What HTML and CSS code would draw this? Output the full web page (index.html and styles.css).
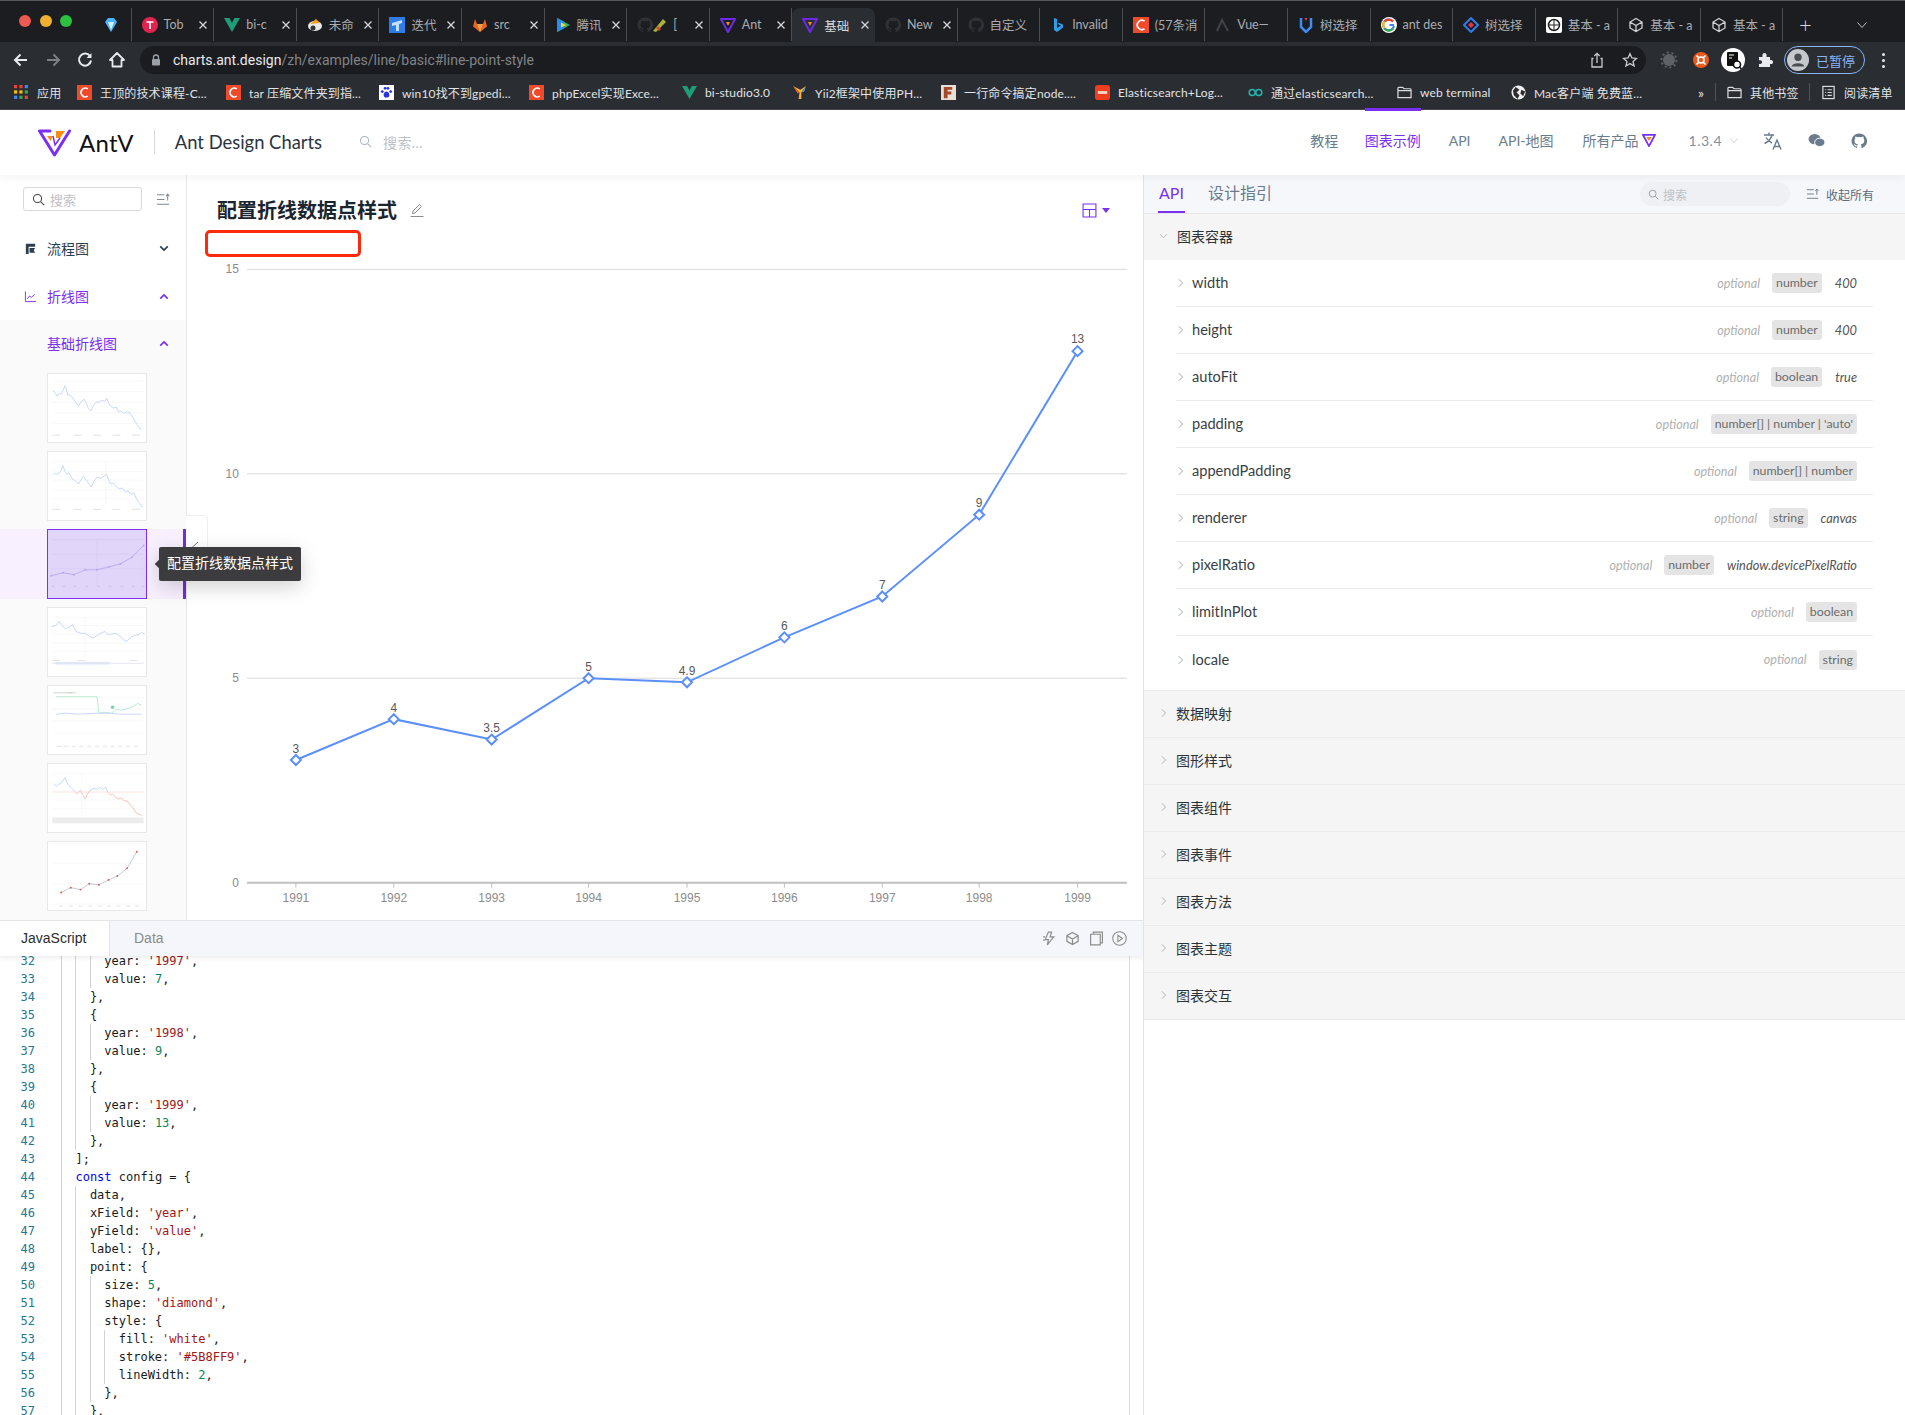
FILE: index.html
```html
<!DOCTYPE html>
<html lang="zh">
<head>
<meta charset="utf-8">
<title>配置折线数据点样式</title>
<link rel="stylesheet" href="styles.css">
</head>
<body>
<svg class="defs" width="0" height="0" aria-hidden="true">
  <defs>
    <symbol id="antv" viewBox="0 0 33 28">
      <path d="M1.5 2 H12 M1.5 2 L16.5 26 L31.5 2" fill="none" stroke="#7a2ff2" stroke-width="3" stroke-linejoin="round" stroke-linecap="round"/>
      <path d="M9 7 H15 L12.5 12 Z" fill="#fa8c16"/>
      <path d="M18 2 H27 L22 9 H18 Z" fill="#fa8c16"/>
      <path d="M15 7 L17 16 L22 9" fill="none" stroke="#7a2ff2" stroke-width="1.5"/>
    </symbol>
    <symbol id="cfav" viewBox="0 0 16 16"><rect width="16" height="16" fill="#f04a2a"/><path d="M11.5 4.2A4.6 4.6 0 1 0 11.5 11.8" fill="none" stroke="#fff" stroke-width="1.7"/></symbol>
    <symbol id="vfav" viewBox="0 0 16 16"><path d="M0 1H5.5L8 6L10.5 1H16L8 15Z" fill="#1f9d78"/></symbol>
    <symbol id="purp" viewBox="0 0 16 16"><path d="M1 2H15L8 15Z" fill="none" stroke="#6d2be8" stroke-width="2" stroke-linejoin="round"/><path d="M6 5H10L8 9Z" fill="#fa8c16"/></symbol>
    <symbol id="gh" viewBox="0 0 16 16"><path d="M8 .5a7.5 7.5 0 0 0-2.4 14.6c.4.1.5-.2.5-.4v-1.3c-2.1.5-2.5-1-2.5-1-.3-.9-.8-1.100-.8-1.100-.7-.5.100-.5.100-.5.800.1 1.200.8 1.200.8.700 1.200 1.800.9 2.300.7.100-.5.300-.9.500-1.100-1.700-.2-3.400-.8-3.400-3.700 0-.8.300-1.500.8-2-.1-.2-.3-1 .1-2 0 0 .6-.2 2.100.8a7 7 0 0 1 3.800 0c1.400-1 2.100-.8 2.100-.8.400 1 .1 1.800.1 2 .5.500.8 1.200.8 2 0 2.900-1.800 3.500-3.400 3.700.3.200.5.700.5 1.400v2.100c0 .2.100.5.500.4A7.500 7.500 0 0 0 8 .5Z"/></symbol>
    <symbol id="cube" viewBox="0 0 16 16"><path d="M8 1.500 14 5V11L8 14.500 2 11V5ZM2 5 8 8.500 14 5M8 8.500V14.500" fill="none" stroke="currentColor" stroke-width="1.300"/></symbol>
    <symbol id="folder" viewBox="0 0 16 14"><path d="M1 12.500V2.500C1 2 1.300 1.500 2 1.500H6L7.500 3H14C14.600 3 15 3.400 15 4V12.500Z M1 5H15" fill="none" stroke="#dadce0" stroke-width="1.300"/></symbol>
    <symbol id="search" viewBox="0 0 16 16"><circle cx="6.800" cy="6.800" r="5" fill="none" stroke="currentColor" stroke-width="1.300"/><path d="M10.500 10.500 15 15" stroke="currentColor" stroke-width="1.300"/></symbol>
    <symbol id="collapse" viewBox="0 0 16 14"><path d="M1 2H9M1 7H9M1 12H14M12.500 8V1.500M10.800 3.400 12.500 1.200 14.200 3.400" fill="none" stroke="currentColor" stroke-width="1.100"/></symbol>
    <symbol id="down" viewBox="0 0 12 8"><path d="M1.500 1.500 6 6 10.500 1.500" fill="none" stroke="currentColor" stroke-width="2"/></symbol>
    <symbol id="up" viewBox="0 0 12 8"><path d="M1.500 6.500 6 2 10.500 6.500" fill="none" stroke="currentColor" stroke-width="2"/></symbol>
    <symbol id="right" viewBox="0 0 8 12"><path d="M2 1.500 6.500 6 2 10.500" fill="none" stroke="currentColor" stroke-width="1"/></symbol>
    <symbol id="tdown" viewBox="0 0 12 8"><path d="M1.500 1.500 6 6.500 10.500 1.500" fill="none" stroke="currentColor" stroke-width="1"/></symbol>
    <symbol id="x" viewBox="0 0 10 10"><path d="M1.500 1.500 8.500 8.500M8.500 1.500 1.500 8.500" stroke="#d5d7da" stroke-width="1.300"/></symbol>
  </defs>
</svg>

<div class="chrome">
  <div class="tabbar">
    <div class="lights"><i class="light red"></i><i class="light amber"></i><i class="light green"></i></div>
    <div class="tab pin"><svg class="fav" viewBox="0 0 16 16"><path d="M2 5 5 1H11L14 5 8 15Z" fill="#48b4ff"/><path d="M5 5H11L8 13Z" fill="#d9f1ff"/></svg></div>
    <div class="tab"><svg class="fav" viewBox="0 0 16 16"><circle cx="8" cy="8" r="8" fill="#e0244f"/><path d="M4.500 5H11.500M8 5V12" stroke="#fff" stroke-width="1.600"/></svg><span>Tob</span><svg class="close"><use href="#x"/></svg></div>
    <div class="tab"><svg class="fav"><use href="#vfav"/></svg><span>bi-c</span><svg class="close"><use href="#x"/></svg></div>
    <div class="tab"><svg class="fav" viewBox="0 0 16 16"><ellipse cx="8" cy="9" rx="7" ry="5" fill="#e8e8e8"/><path d="M3 7 9 2 13 6Z" fill="#f0a020"/><circle cx="6" cy="11" r="2.500" fill="#333"/></svg><span>未命</span><svg class="close"><use href="#x"/></svg></div>
    <div class="tab"><svg class="fav" viewBox="0 0 16 16"><rect width="16" height="16" fill="#2f7ce6"/><path d="M3 6 13 3V6L10 7V14H7V8L3 9Z" fill="#bfe0ff"/></svg><span>迭代</span><svg class="close"><use href="#x"/></svg></div>
    <div class="tab"><svg class="fav" viewBox="0 0 16 16"><path d="M8 15 1 9.500 3 2 5 7H11L13 2 15 9.500Z" fill="#e8632a"/><path d="M8 15 5 7H11Z" fill="#f5a142"/></svg><span>src</span><svg class="close"><use href="#x"/></svg></div>
    <div class="tab"><svg class="fav" viewBox="0 0 16 16"><path d="M2 1 15 8 2 15Z" fill="#31b36b"/><path d="M2 1 9 4.500V11.500L2 15Z" fill="#2a8cef"/><path d="M6 5.500 11 8 6 10.500Z" fill="#f7d23e"/></svg><span>腾讯</span><svg class="close"><use href="#x"/></svg></div>
    <div class="tab"><svg class="fav dark"><use href="#gh"/></svg><svg class="fav mini" viewBox="0 0 16 16"><path d="M2 14 12 2 15 5 5 15Z" fill="#a7b23a"/><path d="M7 9 10 12 8 14 5 11Z" fill="#d2453a"/></svg><span>[</span><svg class="close"><use href="#x"/></svg></div>
    <div class="tab"><svg class="fav"><use href="#purp"/></svg><span>Ant</span><svg class="close"><use href="#x"/></svg></div>
    <div class="tab active"><svg class="fav"><use href="#purp"/></svg><span>基础</span><svg class="close"><use href="#x"/></svg></div>
    <div class="tab"><svg class="fav dark"><use href="#gh"/></svg><span>New</span><svg class="close"><use href="#x"/></svg></div>
    <div class="tab"><svg class="fav dark"><use href="#gh"/></svg><span>自定义</span></div>
    <div class="tab"><svg class="fav" viewBox="0 0 16 16"><path d="M4 1 7 2V11L11 8.500 8.500 7.500 7.500 5.500 13 7.500V10.500L7 15 4 13Z" fill="#2c9fe8"/></svg><span>Invalid</span></div>
    <div class="tab"><svg class="fav"><use href="#cfav"/></svg><span>(57条消</span></div>
    <div class="tab"><svg class="fav dark" viewBox="0 0 16 16"><path d="M2 14 7 3 13 14" fill="none" stroke="#3f4246" stroke-width="2"/></svg><span>Vue—</span></div>
    <div class="tab"><svg class="fav" viewBox="0 0 16 16"><path d="M3 1V10L8 15 13 10V1" fill="none" stroke="#3f8cf0" stroke-width="2.500"/><path d="M6.500 1H9.500L8 4Z" fill="#e0354b"/></svg><span>树选择</span></div>
    <div class="tab"><svg class="fav" viewBox="0 0 16 16"><circle cx="8" cy="8" r="8" fill="#fff"/><path d="M13 8H8.500M12 4.500A5.500 5.500 0 1 0 13 9" fill="none" stroke="#4285f4" stroke-width="2.200"/><path d="M3.600 4.500A5.500 5.500 0 0 1 12 4.500" fill="none" stroke="#ea4335" stroke-width="2.200"/><path d="M3.500 11.300A5.500 5.500 0 0 1 3.600 4.500" fill="none" stroke="#fbbc05" stroke-width="2.200"/><path d="M3.500 11.300A5.500 5.500 0 0 0 12 11.800" fill="none" stroke="#34a853" stroke-width="2.200"/></svg><span>ant des</span></div>
    <div class="tab"><svg class="fav" viewBox="0 0 16 16"><path d="M8 1 15 8 8 15 1 8Z" fill="none" stroke="#2f7ce6" stroke-width="2"/><path d="M8 5 11 8 8 11 5 8Z" fill="#e0354b"/></svg><span>树选择</span></div>
    <div class="tab"><svg class="fav" viewBox="0 0 16 16"><rect width="16" height="16" rx="2" fill="#fff"/><circle cx="8" cy="8" r="5.500" fill="none" stroke="#222" stroke-width="1.500"/><path d="M8 2.500V13.500M2.500 8H13.500" stroke="#222"/></svg><span>基本 - a</span></div>
    <div class="tab"><svg class="fav lite"><use href="#cube"/></svg><span>基本 - a</span></div>
    <div class="tab"><svg class="fav lite"><use href="#cube"/></svg><span>基本 - a</span></div>
    <div class="newtab">+</div>
    <svg class="tabmore"><use href="#tdown"/></svg>
  </div>

  <div class="toolbar">
    <svg class="tool" viewBox="0 0 18 18"><path d="M15 9H3.500M8.500 3.500 3 9 8.500 14.500" fill="none" stroke="#e8eaed" stroke-width="2"/></svg>
    <svg class="tool" viewBox="0 0 18 18"><path d="M3 9H14.500M9.500 3.500 15 9 9.500 14.500" fill="none" stroke="#7d8085" stroke-width="2"/></svg>
    <svg class="tool" viewBox="0 0 18 18"><path d="M14 5.200A6 6 0 1 0 15 9.500" fill="none" stroke="#e8eaed" stroke-width="2"/><path d="M15.500 2V7H10.500Z" fill="#e8eaed"/></svg>
    <svg class="tool" viewBox="0 0 18 18"><path d="M9 2 2 9H4.500V15.500H13.500V9H16Z" fill="none" stroke="#e8eaed" stroke-width="1.800" stroke-linejoin="round"/></svg>
    <div class="omni">
      <svg class="lock" viewBox="0 0 10 12"><path d="M2.500 5V3.500a2.500 2.500 0 0 1 5 0V5" fill="none" stroke="#9aa0a6" stroke-width="1.300"/><rect x="1" y="5" width="8" height="6.500" rx="1" fill="#9aa0a6"/></svg>
      <span class="host">charts.ant.design</span><span class="path">/zh/examples/line/basic#line-point-style</span>
      <svg class="omni-ico first" viewBox="0 0 16 16"><path d="M4.500 6.500H3V15H13V6.500H11.500M8 11V1.500M5.300 4 8 1.300 10.700 4" fill="none" stroke="#c8cacd" stroke-width="1.300"/></svg>
      <svg class="omni-ico" viewBox="0 0 16 16"><path d="M8 1.700 9.900 6 14.500 6.400 11 9.500 12.100 14 8 11.600 3.900 14 5 9.500 1.500 6.400 6.100 6Z" fill="none" stroke="#c8cacd" stroke-width="1.300"/></svg>
    </div>
    <svg class="ext gear" viewBox="0 0 18 18"><circle cx="9" cy="9" r="6" fill="#5f6266"/><circle cx="9" cy="9" r="7.500" fill="none" stroke="#5f6266" stroke-width="2" stroke-dasharray="2 2.700"/></svg>
    <svg class="ext orange" viewBox="0 0 16 16"><circle cx="8" cy="8" r="8" fill="#e95a1f"/><circle cx="8" cy="8" r="3" fill="none" stroke="#fff" stroke-width="1.500"/><path d="M3.500 3.500 6 6M12.500 3.500 10 6M3.500 12.500 6 10M12.500 12.500 10 10" stroke="#fff" stroke-width="1.700"/></svg>
    <svg class="ext blackc" viewBox="0 0 24 24"><circle cx="12" cy="12" r="12" fill="#fff"/><rect x="6" y="4" width="11" height="14" rx="1" fill="#111"/><path d="M8 7H13M8 10H11" stroke="#fff"/><circle cx="16" cy="16.500" r="3.500" fill="#fff" stroke="#111" stroke-width="1.600"/><path d="M18.500 19 20.500 21" stroke="#111" stroke-width="1.600"/></svg>
    <svg class="ext puzzle" viewBox="0 0 16 16"><path d="M2 5H5.500C5 2 6 1 7.500 1S10 2 9.500 5H13V8C15.500 7.500 16 8.800 16 10S15.500 12.500 13 12V15H2V11.800C4 12.400 5 11.500 5 10S4 7.800 2 8.300Z" fill="#e8eaed"/></svg>
    <div class="profile">
      <svg class="avatar" viewBox="0 0 24 24"><circle cx="12" cy="12" r="12" fill="#c5c8cd"/><circle cx="12" cy="9" r="4" fill="#4a4d52"/><path d="M5 19C6 14.500 18 14.500 19 19Z" fill="#4a4d52"/></svg>
      <span>已暂停</span>
    </div>
    <div class="dots"><i></i><i></i><i></i></div>
  </div>

  <div class="bookmarks">
    <a class="bm"><svg class="bi" viewBox="0 0 14 14"><g fill="#ea4335"><rect width="3" height="3"/><rect x="5" width="3" height="3"/></g><rect x="10" width="3" height="3" fill="#4285f4"/><g fill="#fbbc05"><rect y="5" width="3" height="3"/><rect x="5" y="5" width="3" height="3"/></g><rect x="10" y="5" width="3" height="3" fill="#34a853"/><g fill="#4285f4"><rect y="10" width="3" height="3"/></g><rect x="5" y="10" width="3" height="3" fill="#34a853"/><rect x="10" y="10" width="3" height="3" fill="#ea4335"/></svg>应用</a>
    <a class="bm"><svg class="bi"><use href="#cfav"/></svg>王顶的技术课程-C...</a>
    <a class="bm"><svg class="bi"><use href="#cfav"/></svg>tar 压缩文件夹到指...</a>
    <a class="bm"><svg class="bi" viewBox="0 0 16 16"><rect width="16" height="16" fill="#fff"/><path d="M8 7C5 7 4 12 6 13 7 13.500 9 13.500 10 13 12 12 11 7 8 7Z" fill="#2932e1"/><g fill="#2932e1"><circle cx="3.500" cy="7" r="1.500"/><circle cx="6.500" cy="3.500" r="1.500"/><circle cx="9.500" cy="3.500" r="1.500"/><circle cx="12.500" cy="7" r="1.500"/></g></svg>win10找不到gpedi...</a>
    <a class="bm"><svg class="bi"><use href="#cfav"/></svg>phpExcel实现Exce...</a>
    <a class="bm"><svg class="bi"><use href="#vfav"/></svg>bi-studio3.0</a>
    <a class="bm"><svg class="bi" viewBox="0 0 16 16"><path d="M1 1 8 8 7 15H10L10 8 15 1 9 5Z" fill="#f2b035"/><path d="M1 1 8 8 6 9Z" fill="#e85c3a"/><path d="M15 1 10 8 13 7Z" fill="#4ba3dc"/></svg>Yii2框架中使用PH...</a>
    <a class="bm"><svg class="bi" viewBox="0 0 16 16"><rect width="16" height="16" fill="#e8e0d8"/><path d="M3 2H12V5H7V7H11V10H7V14H3Z" fill="#a34a2c"/></svg>一行命令搞定node....</a>
    <a class="bm"><svg class="bi" viewBox="0 0 16 16"><rect width="16" height="16" rx="3" fill="#f03d1f"/><rect x="3" y="6.500" width="10" height="3" fill="#ffd7c9"/></svg>Elasticsearch+Log...</a>
    <a class="bm"><svg class="bi" viewBox="0 0 16 16"><circle cx="4.500" cy="8" r="3.200" fill="none" stroke="#25b5ad" stroke-width="1.600"/><circle cx="11.500" cy="8" r="3.200" fill="none" stroke="#25b5ad" stroke-width="1.600"/></svg>通过elasticsearch...</a>
    <a class="bm"><svg class="bi"><use href="#folder"/></svg>web terminal</a>
    <a class="bm"><svg class="bi" viewBox="0 0 16 16"><circle cx="8" cy="8" r="7.500" fill="#f1f1f1"/><path d="M5 2 9 5 6 8 9 11 7 15 3 11 2 6ZM11 5 15 7 13 12 10 9Z" fill="#2b2d31"/></svg>Mac客户端 免费蓝...</a>
    <a class="bm more">»</a>
    <a class="bm sep"><svg class="bi"><use href="#folder"/></svg>其他书签</a>
    <a class="bm sep"><svg class="bi" viewBox="0 0 16 16"><rect x="2" y="1.500" width="12" height="13" fill="none" stroke="#dadce0" stroke-width="1.300"/><path d="M4.500 5H5.500M7 5H11.500M4.500 8H5.500M7 8H11.500M4.500 11H5.500M7 11H11.500" stroke="#dadce0" stroke-width="1.200"/></svg>阅读清单</a>
  </div>
</div>

<header class="site">
  <svg class="logo"><use href="#antv"/></svg>
  <span class="brand">AntV</span>
  <span class="brand-sep"></span>
  <span class="product">Ant Design Charts</span>
  <svg class="hsearch"><use href="#search"/></svg>
  <span class="hsearch-text">搜索…</span>
  <nav class="nav">
    <a class="n1">教程</a>
    <a class="n2 on">图表示例</a>
    <a class="n3">API</a>
    <a class="n4">API-地图</a>
    <a class="n5">所有产品<svg class="mini-logo" viewBox="0 0 16 16"><path d="M1 2H15L8 15Z" fill="none" stroke="#7a2ff2" stroke-width="2" stroke-linejoin="round"/><path d="M5 4.500H11L8 9.500Z" fill="#fa8c16"/></svg></a>
    <span class="ver">1.3.4<svg class="ver-c"><use href="#tdown"/></svg></span>
    <svg class="hico lang" viewBox="0 0 20 20"><path d="M1 4H11M6 1.500V4M9 4C8 8 5 11 1.500 12.500M3 6.500C4.500 9 6.500 11 9 12M10 18.500 14 9 18 18.500M11.500 15.500H16.500" fill="none" stroke="#697b8c" stroke-width="1.400"/></svg>
    <svg class="hico wechat" viewBox="0 0 18 16"><ellipse cx="7" cy="6.500" rx="6.500" ry="5.500" fill="#697b8c"/><ellipse cx="12.500" cy="10" rx="5.500" ry="4.500" fill="#697b8c" stroke="#fff"/></svg>
    <svg class="hico github"><use href="#gh"/></svg>
  </nav>
</header>

<main class="main">
  <section class="left">
    <div class="upper">
      <aside class="side">
        <div class="side-search">
          <div class="sbox"><svg class="sbox-i"><use href="#search"/></svg><span>搜索</span></div>
          <svg class="side-collapse"><use href="#collapse"/></svg>
        </div>
        <div class="menu">
          <svg class="menu-i" viewBox="0 0 14 14"><path d="M2 2H12V5H5V13H2ZM6 6.500H12L10.500 9 12 11.500H6Z" fill="#2c3e50"/></svg>
          <span>流程图</span><svg class="caret"><use href="#down"/></svg>
        </div>
        <div class="menu purple">
          <svg class="menu-i" viewBox="0 0 14 14"><path d="M1.500 1.500V12.500H13M3.500 9.500 6 6.500 8 8 11.500 4.500" fill="none" stroke="currentColor" stroke-width="1"/></svg>
          <span>折线图</span><svg class="caret"><use href="#up"/></svg>
        </div>
        <div class="sub">
          <div class="sub-head"><span>基础折线图</span><svg class="caret"><use href="#up"/></svg></div>
          <div class="thumbrow"><svg class="thumb" viewBox="0 0 100 70"><g class="tg"><path d="M4 7H98M4 18H98M4 29H98M4 40H98M4 51H98"/></g><polyline class="tl" points="5,17 7,20 9,23 11,20 13,21 15,17 17,12 18,14 20,22 22,21 25,25 28,29 31,33 34,28 37,26 39,30 41,35 44,38 46,33 49,29 52,29 55,27 58,28 60,25 62,30 64,33 67,35 70,34 72,39 75,38 78,41 80,39 84,40 87,45 90,50 93,55 96,57"/><g class="ta"><path d="M4 63H12M26 63H34M46 63H54M66 63H74M86 63H94"/></g></svg></div>
          <div class="thumbrow"><svg class="thumb" viewBox="0 0 100 70"><g class="tg"><path d="M4 10H98M4 20H98M4 29H98M4 39H98M4 48H98M59 10V57"/></g><polyline class="tl" points="5,24 7,22 10,23 13,19 15,14 17,20 19,23 21,21 24,27 28,30 31,33 34,28 36,25 39,29 42,33 44,36 47,30 50,26 54,27 57,25 60,23 62,29 64,33 67,32 70,36 73,38 76,37 79,41 82,40 85,44 88,42 91,49 94,53 97,57"/><g class="ta"><path d="M4 59H12M26 59H34M46 59H54M66 59H74M86 59H94"/></g></svg></div>
          <div class="thumbrow selected"><svg class="thumb" viewBox="0 0 100 70"><g class="tg"><path d="M3 10H98M3 25H98M3 40H98M50 10V58"/></g><polyline class="tl" points="3,47 15,44 26,46 38,41 50,41 62,38 74,35 86,28 98,16"/><g class="tp"><circle cx="3" cy="47" r="1"/><circle cx="15" cy="44" r="1"/><circle cx="26" cy="46" r="1"/><circle cx="38" cy="41" r="1"/><circle cx="50" cy="41" r="1"/><circle cx="62" cy="38" r="1"/><circle cx="74" cy="35" r="1"/><circle cx="86" cy="28" r="1"/><circle cx="98" cy="16" r="1"/></g><g class="ta"><path d="M3 58H6M14 58H17M26 58H29M38 58H41M50 58H53M62 58H65M74 58H77M86 58H89M96 58H99"/></g></svg></div>
          <div class="thumbrow"><svg class="thumb" viewBox="0 0 100 70"><g class="tg"><path d="M4 10H98M4 18H98M4 27H98M4 36H98M4 45H98M38 10V52"/></g><polyline class="tl" points="3,19 8,18 11,14 14,18 17,21 21,20 25,17 28,24 33,26 38,26 42,29 46,31 52,27 58,24 61,27 64,27 70,26 75,30 79,34 81,34 85,30 90,28 94,27 96,25 99,27"/><g class="ta"><path d="M4 54H12M30 54H38M84 54H92"/></g><rect x="7" y="56" width="56" height="2" fill="#c5d7fb"/><path d="M3 57H98" stroke="#e4e8f0"/></svg></div>
          <div class="thumbrow"><svg class="thumb" viewBox="0 0 100 70"><g class="tg"><path d="M4 12H98M4 24H98M4 36H98M4 48H98"/></g><polyline class="tl green" points="8,11 50,11 52,28 58,27 65,28 70,24 75,25 85,22 92,18 96,20"/><polyline class="tl" points="8,29 18,28 30,29 50,28 62,28 75,29 85,29 96,29"/><circle cx="66" cy="22" r="1.800" fill="#6fd8a7"/><path d="M5 7H24M20 7H28" stroke="#c9d5c9"/><g class="ta"><path d="M8 62H14M16 62H21M24 62H28M32 62H36M40 62H44M48 62H52M56 62H60M64 62H68M72 62H76M80 62H84M88 62H92"/></g></svg></div>
          <div class="thumbrow"><svg class="thumb" viewBox="0 0 100 70"><g class="tg"><path d="M4 10H98M4 28H98M4 37H98M4 46H98M34 10V55"/></g><path d="M4 29H98" stroke="#ffd5cc" stroke-width=".5"/><polyline class="tl" points="5,20 8,23 10,21 13,20 15,17 17,14 19,19 21,22 24,25 26,27 29,31"/><polyline class="tl red" points="29,31 31,29 33,27 36,33 38,36 40,31 43,27"/><polyline class="tl" points="43,27 47,25 50,26 53,24 56,26 59,24 61,29"/><polyline class="tl red" points="61,29 64,32 66,31 69,34 72,36 75,35 78,38 81,38 84,42 87,45 90,50 96,53"/><rect x="4" y="55" width="94" height="6" fill="#ececec"/></svg></div>
          <div class="thumbrow"><svg class="thumb" viewBox="0 0 100 70"><g class="tg"><path d="M4 2H98M4 22H98M4 43H98M4 64H98"/></g><polyline class="tl grey" points="13,52 23,47 33,49 42,43 52,44 62,39 71,35 81,27 91,10"/><g class="tr"><circle cx="13" cy="52" r="1"/><circle cx="23" cy="47" r="1"/><circle cx="33" cy="49" r="1"/><circle cx="42" cy="43" r="1"/><circle cx="52" cy="44" r="1"/><circle cx="62" cy="39" r="1"/><circle cx="71" cy="35" r="1"/><circle cx="81" cy="27" r="1"/><circle cx="91" cy="10" r="1"/></g><g class="ta"><path d="M11 66H15M21 66H25M31 66H35M41 66H45M51 66H55M60 66H64M70 66H74M80 66H84M89 66H93"/></g></svg></div>
        </div>
      </aside>
      <div class="chart">
        <div class="chart-head">
          <h1>配置折线数据点样式</h1>
          <svg class="edit" viewBox="0 0 14 14"><path d="M2.500 10.500 3 8 9.500 1.500 11.500 3.500 5 10ZM.500 13.500H13.500" fill="none" stroke="#8c8c8c" stroke-width="1"/></svg>
          <svg class="layout" viewBox="0 0 14 14"><path d="M1 1H13V13H1ZM1 6H13M7 6V13" fill="none" stroke="#7a2ff2" stroke-width="1"/></svg>
          <i class="layout-caret"></i>
        </div>
        <svg class="plot" viewBox="0 0 957 712">
          <g class="grid">
            <path d="M60 34H941M60 238.700H941M60 443.300H941"/>
            <path class="axis" d="M60 648H941"/>
            <path class="tick" d="M109 648V653M207 648V653M305 648V653M402 648V653M500.500 648V653M598 648V653M696 648V653M793 648V653M891.500 648V653"/>
          </g>
          <g class="ylab">
            <text x="52" y="38">15</text><text x="52" y="243">10</text><text x="52" y="447">5</text><text x="52" y="652">0</text>
          </g>
          <g class="xlab">
            <text x="109" y="667">1991</text><text x="207" y="667">1992</text><text x="305" y="667">1993</text><text x="402" y="667">1994</text><text x="500.500" y="667">1995</text><text x="598" y="667">1996</text><text x="696" y="667">1997</text><text x="793" y="667">1998</text><text x="891.500" y="667">1999</text>
          </g>
          <polyline class="series" points="109,525.200 207,484.300 305,504.700 402,443.300 500.500,447.400 598,402.400 696,361.500 793,279.600 891.500,115.900"/>
          <g class="pts">
            <path d="M109 520.200 114 525.200 109 530.200 104 525.200Z"/>
            <path d="M207 479.300 212 484.300 207 489.300 202 484.300Z"/>
            <path d="M305 499.700 310 504.700 305 509.700 300 504.700Z"/>
            <path d="M402 438.300 407 443.300 402 448.300 397 443.300Z"/>
            <path d="M500.500 442.400 505.500 447.400 500.500 452.400 495.500 447.400Z"/>
            <path d="M598 397.400 603 402.400 598 407.400 593 402.400Z"/>
            <path d="M696 356.500 701 361.500 696 366.500 691 361.500Z"/>
            <path d="M793 274.600 798 279.600 793 284.600 788 279.600Z"/>
            <path d="M891.500 110.900 896.500 115.900 891.500 120.900 886.500 115.900Z"/>
          </g>
          <g class="dlab">
            <text x="109" y="518">3</text><text x="207" y="477">4</text><text x="305" y="497">3.5</text><text x="402" y="436">5</text><text x="500.500" y="440">4.9</text><text x="598" y="395">6</text><text x="696" y="354">7</text><text x="793" y="272">9</text><text x="891.500" y="108">13</text>
          </g>
        </svg>
      </div>
      <span class="annot"></span>
      <div class="handle"><svg class="handle-i" viewBox="0 0 8 12"><path d="M7 1 1.500 6 7 11" fill="none" stroke="#697b8c" stroke-width="1"/></svg></div>
      <div class="tip">配置折线数据点样式</div>
    </div>
    <div class="editor">
      <div class="ed-tabs">
        <div class="ed-tab on">JavaScript</div>
        <div class="ed-tab">Data</div>
        <div class="ed-tools">
          <svg viewBox="0 0 14 14"><path d="M9 1H6L3 8H6L5 13 11 5.500H7.500ZM1 5.500H3M1 8.500H2.500" fill="none" stroke="#8c8c8c" stroke-width="1.100"/></svg>
          <svg><use href="#cube"/></svg>
          <svg viewBox="0 0 14 14"><path d="M4 3V1H12.500V11H10.500M1.500 3H10.500V13H1.500Z" fill="none" stroke="#8c8c8c" stroke-width="1.100"/></svg>
          <svg viewBox="0 0 14 14"><circle cx="7" cy="7" r="6.300" fill="none" stroke="#8c8c8c" stroke-width="1"/><path d="M5.500 4 9.700 7 5.500 10Z" fill="none" stroke="#8c8c8c"/></svg>
        </div>
      </div>
      <div class="code">
        <div class="ln"><b>32</b><i></i><i></i><i></i>year: <s>'1997'</s>,</div>
        <div class="ln"><b>33</b><i></i><i></i><i></i>value: <u>7</u>,</div>
        <div class="ln"><b>34</b><i></i><i></i>},</div>
        <div class="ln"><b>35</b><i></i><i></i>{</div>
        <div class="ln"><b>36</b><i></i><i></i><i></i>year: <s>'1998'</s>,</div>
        <div class="ln"><b>37</b><i></i><i></i><i></i>value: <u>9</u>,</div>
        <div class="ln"><b>38</b><i></i><i></i>},</div>
        <div class="ln"><b>39</b><i></i><i></i>{</div>
        <div class="ln"><b>40</b><i></i><i></i><i></i>year: <s>'1999'</s>,</div>
        <div class="ln"><b>41</b><i></i><i></i><i></i>value: <u>13</u>,</div>
        <div class="ln"><b>42</b><i></i><i></i>},</div>
        <div class="ln"><b>43</b><i></i>];</div>
        <div class="ln"><b>44</b><i></i><em>const</em> config = {</div>
        <div class="ln"><b>45</b><i></i><i></i>data,</div>
        <div class="ln"><b>46</b><i></i><i></i>xField: <s>'year'</s>,</div>
        <div class="ln"><b>47</b><i></i><i></i>yField: <s>'value'</s>,</div>
        <div class="ln"><b>48</b><i></i><i></i>label: {},</div>
        <div class="ln"><b>49</b><i></i><i></i>point: {</div>
        <div class="ln"><b>50</b><i></i><i></i><i></i>size: <u>5</u>,</div>
        <div class="ln"><b>51</b><i></i><i></i><i></i>shape: <s>'diamond'</s>,</div>
        <div class="ln"><b>52</b><i></i><i></i><i></i>style: {</div>
        <div class="ln"><b>53</b><i></i><i></i><i></i><i></i>fill: <s>'white'</s>,</div>
        <div class="ln"><b>54</b><i></i><i></i><i></i><i></i>stroke: <s>'#5B8FF9'</s>,</div>
        <div class="ln"><b>55</b><i></i><i></i><i></i><i></i>lineWidth: <u>2</u>,</div>
        <div class="ln"><b>56</b><i></i><i></i><i></i>},</div>
        <div class="ln"><b>57</b><i></i><i></i>},</div>
      </div>
    </div>
  </section>

  <section class="right">
    <div class="r-head">
      <a class="r-tab on">API</a>
      <a class="r-tab">设计指引</a>
      <div class="r-search"><svg><use href="#search"/></svg><span>搜索</span></div>
      <div class="r-collapse"><svg><use href="#collapse"/></svg><span>收起所有</span></div>
    </div>
    <div class="sec open"><svg class="sec-a down"><use href="#tdown"/></svg>图表容器</div>
    <div class="rows">
      <div class="row"><svg class="row-a"><use href="#right"/></svg><span class="name">width</span><span class="opt">optional</span><span class="tag">number</span><span class="def">400</span></div>
      <div class="row"><svg class="row-a"><use href="#right"/></svg><span class="name">height</span><span class="opt">optional</span><span class="tag">number</span><span class="def">400</span></div>
      <div class="row"><svg class="row-a"><use href="#right"/></svg><span class="name">autoFit</span><span class="opt">optional</span><span class="tag">boolean</span><span class="def">true</span></div>
      <div class="row"><svg class="row-a"><use href="#right"/></svg><span class="name">padding</span><span class="opt">optional</span><span class="tag">number[] | number | 'auto'</span></div>
      <div class="row"><svg class="row-a"><use href="#right"/></svg><span class="name">appendPadding</span><span class="opt">optional</span><span class="tag">number[] | number</span></div>
      <div class="row"><svg class="row-a"><use href="#right"/></svg><span class="name">renderer</span><span class="opt">optional</span><span class="tag">string</span><span class="def">canvas</span></div>
      <div class="row"><svg class="row-a"><use href="#right"/></svg><span class="name">pixelRatio</span><span class="opt">optional</span><span class="tag">number</span><span class="def">window.devicePixelRatio</span></div>
      <div class="row"><svg class="row-a"><use href="#right"/></svg><span class="name">limitInPlot</span><span class="opt">optional</span><span class="tag">boolean</span></div>
      <div class="row last"><svg class="row-a"><use href="#right"/></svg><span class="name">locale</span><span class="opt">optional</span><span class="tag">string</span></div>
    </div>
    <div class="sec"><svg class="sec-a"><use href="#right"/></svg>数据映射</div>
    <div class="sec"><svg class="sec-a"><use href="#right"/></svg>图形样式</div>
    <div class="sec"><svg class="sec-a"><use href="#right"/></svg>图表组件</div>
    <div class="sec"><svg class="sec-a"><use href="#right"/></svg>图表事件</div>
    <div class="sec"><svg class="sec-a"><use href="#right"/></svg>图表方法</div>
    <div class="sec"><svg class="sec-a"><use href="#right"/></svg>图表主题</div>
    <div class="sec"><svg class="sec-a"><use href="#right"/></svg>图表交互</div>
  </section>
</main>
</body>
</html>
```

FILE: styles.css
```css
* { box-sizing: border-box; }
html, body { margin: 0; height: 1415px; overflow: hidden; background: #fff; }
body { font-family: Lato, "Noto Sans CJK SC", sans-serif; font-size: 14px; color: #2c3e50; }
a { color: inherit; text-decoration: none; }
svg { display: block; flex: none; }
.defs { position: absolute; }

/* browser chrome */
.chrome { height: 110px; background: #2a2d31; color: #e1e3e6; border-bottom: 1px solid #44474b; }
.tabbar { height: 42px; background: #1c1d21; display: flex; align-items: flex-end; padding-left: 88px; border-top: 1px solid #55585c; position: relative; }
.lights { position: absolute; left: 19px; top: 14px; display: flex; gap: 8.500px; }
.light { width: 12px; height: 12px; border-radius: 50%; }
.red { background: #ed5a52; }
.amber { background: #f0b130; }
.green { background: #2cc13f; }
.tab { width: 82.600px; flex: none; height: 33px; margin-bottom: 1px; display: flex; align-items: center; padding: 0 5px 0 10px; gap: 6px; font-size: 12px; color: #a9acb0; border-right: 1px solid #4a4d51; white-space: nowrap; position: relative; }
.tab.pin { width: 43.600px; padding-left: 15px; }
.tab span { flex: 1; font-size: 12.500px; min-width: 0; }
.tab.active { background: #2a2d31; border-radius: 8px 8px 0 0; border-right: 0; color: #d9dbde; height: 34px; margin-bottom: 0; }
.fav { width: 16px; height: 16px; }
.fav.dark { fill: #303236; }
.fav.mini { margin-left: -8px; }
.fav.lite { color: #d0d2d5; }
.close { width: 10px; height: 10px; }
.newtab { width: 44px; height: 33px; text-align: center; font-size: 22px; line-height: 31px; color: #d7d9dc; font-weight: 300; }
.tabmore { width: 12px; height: 8px; color: #bdc1c6; margin: 0 0 13px 29px; }

.toolbar { height: 36px; display: flex; align-items: center; padding-left: 12px; }
.tool { width: 18px; height: 18px; margin-right: 14px; }
.omni { width: 1506px; height: 28px; background: #1b1c20; border-radius: 14px; display: flex; align-items: center; padding: 0 8px 0 11px; font-family: Roboto, sans-serif; font-size: 14px; color: #808488; white-space: nowrap; }
.lock { width: 10px; height: 12px; margin-right: 12px; }
.host { color: #e8eaed; }
.omni-ico { width: 16px; height: 16px; margin-left: 17px; }
.omni-ico.first { margin-left: auto; }
.ext { height: 18px; width: 18px; }
.gear { margin-left: 14px; }
.orange { width: 16px; height: 16px; margin-left: 15px; }
.blackc { width: 24px; height: 24px; margin-left: 12px; }
.puzzle { width: 16px; height: 16px; margin-left: 12px; }
.profile { width: 81px; height: 28px; margin-left: 11px; border: 1px solid #8ab4f8; border-radius: 14px; display: flex; align-items: center; padding-left: 2px; gap: 7px; color: #8ab4f8; font-size: 13px; white-space: nowrap; }
.avatar { width: 22px; height: 22px; }
.dots { margin-left: 17px; display: flex; flex-direction: column; gap: 3px; }
.dots i { width: 3px; height: 3px; border-radius: 50%; background: #e8eaed; display: block; }

.bookmarks { height: 31px; padding: 0 0 3px 14px; display: grid; grid-template-columns: 63px 149px 153px 150px 153px 110px 149px 154px 153px 149px 114px 184px 20px 94px 80px; align-items: center; font-size: 12px; letter-spacing: .15px; white-space: nowrap; color: #e1e3e6; }
.bm { display: flex; align-items: center; gap: 8px; }
.bi { width: 15px; height: 15px; }
.bm.more { font-size: 14px; padding-left: 3px; }
.bm.sep { border-left: 1px solid #4e5155; height: 18px; padding-left: 11px; }

/* site header */
.site { height: 65px; background: #fff; display: flex; align-items: center; padding: 0 0 2px 38px; box-shadow: 0 2px 10px rgba(0, 0, 0, .05); position: relative; z-index: 5; }
.logo { width: 33px; height: 28px; margin-top: 3px; }
.brand { font-size: 24px; margin: 2px 0 0 8px; color: #111; letter-spacing: .3px; line-height: 1; }
.brand-sep { width: 1px; height: 24px; background: #d9d9d9; margin-left: 20px; }
.product { font-size: 18.400px; margin-left: 20px; color: #2b3440; }
.hsearch { width: 13px; height: 13px; color: #a8b4c0; margin-left: 37px; }
.hsearch-text { color: #bcc2c8; margin-left: 11px; letter-spacing: .4px; }
.nav { margin: -2px 0 0 auto; display: flex; align-items: center; height: 65px; padding-right: 38px; color: #697b8c; }
.nav a { height: 65px; border-top: 3px solid transparent; padding-bottom: 4px; white-space: nowrap; display: flex; align-items: center; }
.nav a.on { color: #7a2ff2; border-top-color: #7a2ff2; }
.n2 { margin-left: 26.500px; }
.n3 { margin-left: 28px; }
.n4 { margin-left: 28px; }
.n5 { margin-left: 29px; }
.mini-logo { width: 14px; height: 14px; margin-left: 3px; }
.ver { margin-left: 33px; display: flex; align-items: center; font-size: 14px; color: #8492a0; letter-spacing: .5px; }
.ver-c { width: 10px; height: 7px; color: #c4c9ce; margin-left: 7px; }
.hico { width: 18px; height: 18px; fill: #697b8c; }
.lang { margin-left: 24px; width: 20px; height: 20px; }
.wechat { margin-left: 25px; width: 17px; height: 15px; }
.github { margin-left: 26px; width: 16px; height: 16px; }

/* main */
.main { height: 1240px; display: flex; }
.left { width: 1143px; display: flex; flex-direction: column; position: relative; }
.upper { height: 745px; display: flex; position: relative; }

.side { width: 187px; border-right: 1px solid #e8e8e8; background: #fff; overflow: hidden; }
.side-search { height: 49px; display: flex; align-items: center; padding: 0 0 1px 23px; }
.sbox { width: 119px; height: 24px; border: 1px solid #d9d9d9; border-radius: 3px; display: flex; align-items: center; padding-left: 8px; gap: 5px; color: #bfbfbf; font-size: 13px; }
.sbox-i { width: 13px; height: 13px; color: #444; }
.side-collapse { width: 15px; height: 13px; color: #7f8b96; margin-left: 14px; }
.menu { height: 48px; display: flex; align-items: center; padding-left: 24px; color: #2c3e50; }
.menu.purple { color: #7a2ff2; }
.menu-i { width: 13px; height: 13px; margin-right: 10px; }
.caret { width: 10px; height: 7px; margin-left: auto; margin-right: 17px; }
.sub { background: #fafafa; height: 600px; }
.sub-head { height: 46px; display: flex; align-items: center; padding-left: 47px; color: #7a2ff2; }
.thumbrow { height: 70px; margin-top: 8px; padding-left: 47px; position: relative; }
.sub-head + .thumbrow { margin-top: 7px; }
.thumb { width: 100px; height: 70px; background: #fff; border: 1px solid #e8e8e8; fill: none; }
.tg path { stroke: #f0f0f0; stroke-width: .5; }
.ta path { stroke: #cfcfcf; stroke-width: .6; }
.tl { fill: none; stroke: #c6d7fa; stroke-width: 1; }
.tl.green { stroke: #b8ebd2; }
.tl.red { stroke: #f9bfb5; }
.tl.grey { stroke: #bccbd8; }
.tp circle { fill: #b9a7f2; }
.tr circle { fill: #e05a50; }
.thumbrow.selected { background: #f9f0ff; border-right: 3px solid #722ed1; width: 186px; }
.thumbrow.selected .thumb { background: #e1d5fa; border-color: #7a2ff2; }
.selected .tg path { stroke: #d2c4f0; }
.selected .ta path { stroke: #bfb0e4; }
.selected .tl { stroke: #baaef0; }

.chart { flex: 1; position: relative; }
.chart-head { height: 70px; display: flex; align-items: center; padding: 0 33px 0 30px; }
h1 { margin: 0; font-size: 20px; font-weight: 700; color: #1a2530; line-height: 28px; font-family: "Noto Sans CJK SC", sans-serif; }
.edit { width: 14px; height: 14px; margin-left: 13px; }
.layout { width: 15px; height: 15px; margin-left: auto; }
.layout-caret { width: 0; height: 0; border: 4px solid transparent; border-top: 5px solid #7a2ff2; border-bottom: 0; margin: 0 0 0 5px; }
.plot { position: absolute; left: 0; top: 60px; width: 956px; height: 712px; font-family: "Liberation Sans", sans-serif; font-size: 12px; }
.grid path { stroke: #d9d9d9; fill: none; stroke-width: 1; }
.grid .axis { stroke: #bfbfbf; stroke-width: 2; }
.grid .tick { stroke: #bfbfbf; }
.ylab text { fill: #8c8c8c; text-anchor: end; }
.xlab text { fill: #8c8c8c; text-anchor: middle; }
.dlab text { fill: #595959; text-anchor: middle; }
.series { fill: none; stroke: #5b8ff9; stroke-width: 2; }
.pts path { fill: #fff; stroke: #5b8ff9; stroke-width: 2; }

.annot { position: absolute; left: 205px; top: 55px; width: 156px; height: 27px; border: 3px solid #ff2a0c; border-radius: 5px; z-index: 3; }
.handle { position: absolute; left: 186px; top: 340px; width: 22px; height: 65px; background: #fff; border: 1px solid #f0f0f0; border-left: 0; border-radius: 0 4px 4px 0; display: flex; padding: 25px 0 0 5px; z-index: 2; }
.handle-i { width: 8px; height: 12px; }
.tip { position: absolute; left: 159px; top: 372px; width: 142px; height: 34px; line-height: 32px; background: #3c3c3f; color: #fff; font-size: 14px; border-radius: 2px; text-align: center; white-space: nowrap; box-shadow: 0 6px 20px rgba(0, 0, 0, .18); z-index: 4; }
.tip::before { content: ""; position: absolute; left: -3px; top: 14px; width: 6px; height: 6px; background: #3c3c3f; transform: rotate(45deg); }

/* editor */
.editor { flex: 1; display: flex; flex-direction: column; min-height: 0; overflow: hidden; }
.ed-tabs { height: 36px; flex: none; background: #f5f6fb; display: flex; border-top: 1px solid #e3e3e8; box-shadow: 0 2px 5px rgba(0, 0, 0, .08); position: relative; z-index: 2; align-items: center; }
.ed-tab { width: 110px; height: 35px; line-height: 34px; padding-left: 21px; font-family: "Liberation Sans", sans-serif; font-size: 14px; color: #8c8c8c; }
.ed-tab.on { background: #fff; color: #2b2b2b; border-right: 1px solid #e3e3e8; }
.ed-tab + .ed-tab { padding-left: 24px; }
.ed-tools { margin-left: auto; display: flex; gap: 8.500px; padding-right: 16px; color: #8c8c8c; }
.ed-tools svg { width: 15px; height: 15px; }
.code { width: 1130px; flex: 1; margin-top: -4px; border-right: 1px solid #ddd; font-family: "DejaVu Sans Mono", monospace; font-size: 12px; color: #1a1a1a; background: #fff; }
.ln { height: 18px; line-height: 18px; white-space: pre; display: flex; }
.ln b { width: 35px; margin-right: 26px; font-weight: 400; color: #237893; text-align: right; flex: none; }
.ln i { width: 14.440px; height: 18px; border-left: 1px solid #d3d3d3; flex: none; }
.ln s { text-decoration: none; color: #a31515; }
.ln u { text-decoration: none; color: #098658; }
.ln em { font-style: normal; color: #0000ff; }

/* right panel */
.right { width: 762px; border-left: 1px solid #e3e3e3; background: #fff; height: 1240px; overflow: hidden; }
.r-head { height: 39px; background: #f6f7fb; display: flex; align-items: center; padding-left: 14px; border-bottom: 1px solid #e8e8e8; }
.r-tab { font-size: 16px; height: 38px; line-height: 35px; color: #697b8c; margin-right: 26px; }
.r-tab.on { color: #7a2ff2; border-bottom: 2px solid #7a2ff2; padding: 0 1px; margin-right: 23px; }
.r-search { margin-left: 342px; width: 150px; height: 24px; background: #eff0f3; border-radius: 12px; display: flex; align-items: center; padding-left: 8px; gap: 4px; color: #bcc2c8; font-size: 12px; }
.r-search svg { width: 11px; height: 11px; color: #8c98a4; }
.r-collapse { display: flex; align-items: center; gap: 6px; margin-left: 16px; font-size: 12px; color: #5d6b78; white-space: nowrap; }
.r-collapse svg { width: 14px; height: 12px; color: #697b8c; }
.sec { height: 47px; background: #f5f5f5; border-bottom: 1px solid #ebebeb; display: flex; align-items: center; padding: 0 0 2px 16px; color: #2c3338; font-size: 14px; }
.sec.open { height: 46px; border-bottom: 0; }
.sec-a { width: 7px; height: 10px; color: #a0a8b0; margin-right: 9px; }
.sec-a.down { width: 9px; height: 6px; margin-left: -1px; }
.rows { padding: 0 32px 8px; height: 431px; border-bottom: 1px solid #ebebeb; }
.row { height: 47px; border-bottom: 1px solid #ebebeb; display: flex; align-items: center; padding-right: 16px; white-space: nowrap; }
.row.last { border-bottom: 0; }
.row-a { width: 7px; height: 10px; color: #8c98a4; margin-left: 1px; margin-right: 8px; }
.name { font-size: 14.600px; color: #3a3f45; margin: -1px auto 0 0; }
.opt { font-size: 12.600px; font-style: italic; color: #b0b0b0; margin-left: 12px; }
.tag { font-size: 12.300px; color: #6b6b6b; background: #e4e4e4; border-radius: 3px; height: 20px; line-height: 20px; padding: 0 4px; margin-left: 12px; }
.def { font-size: 12.800px; font-style: italic; color: #555; margin-left: 13px; }
```
